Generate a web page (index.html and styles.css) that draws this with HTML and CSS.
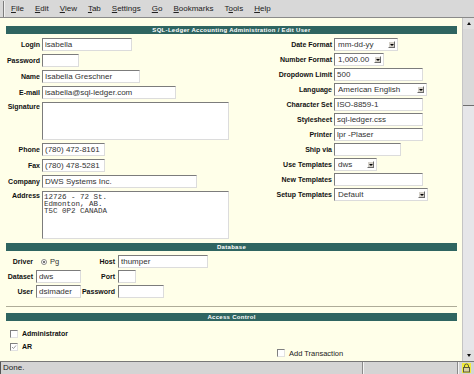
FILE: index.html
```html
<!DOCTYPE html>
<html lang="en">
<head>
    <meta charset="UTF-8">
    <title>SQL-Ledger Accounting Administration / Edit User</title>
    <link rel="stylesheet" href="styles.css">
</head>
<body>
    <div class="menubar">
        <span class="grip"></span>
        <span class="menu"><u>F</u>ile</span>
        <span class="menu"><u>E</u>dit</span>
        <span class="menu"><u>V</u>iew</span>
        <span class="menu"><u>T</u>ab</span>
        <span class="menu"><u>S</u>ettings</span>
        <span class="menu"><u>G</u>o</span>
        <span class="menu"><u>B</u>ookmarks</span>
        <span class="menu">T<u>o</u>ols</span>
        <span class="menu"><u>H</u>elp</span>
    </div>

    <div class="viewport">
        <form class="page">
            <div class="listtop">SQL-Ledger Accounting Administration / Edit User</div>

            <div class="cols">
                <div class="fields left">
                    <label class="lbl">Login</label>
                    <input type="text" class="w90" value="isabella">
                    <label class="lbl">Password</label>
                    <input type="password" class="w37">
                    <label class="lbl">Name</label>
                    <input type="text" class="w98" value="Isabella Greschner">
                    <label class="lbl">E-mail</label>
                    <input type="text" class="w134" value="isabella@sql-ledger.com">
                    <label class="lbl top">Signature</label>
                    <textarea class="sig"></textarea>
                    <label class="lbl">Phone</label>
                    <input type="text" class="w63" value="(780) 472-8161">
                    <label class="lbl">Fax</label>
                    <input type="text" class="w63" value="(780) 478-5281">
                    <label class="lbl">Company</label>
                    <input type="text" class="w155" value="DWS Systems Inc.">
                    <label class="lbl top">Address</label>
                    <textarea class="addr">12726 - 72 St.
Edmonton, AB.
T5C 0P2 CANADA</textarea>
                </div>

                <div class="fields right">
                    <label class="lbl">Date Format</label>
                    <span class="select w64"><select><option>mm-dd-yy</option></select><span class="arrow"></span></span>
                    <label class="lbl">Number Format</label>
                    <span class="select w50"><select><option>1,000.00</option></select><span class="arrow"></span></span>
                    <label class="lbl">Dropdown Limit</label>
                    <input type="text" class="w89" value="500">
                    <label class="lbl">Language</label>
                    <span class="select w93"><select><option>American English</option></select><span class="arrow"></span></span>
                    <label class="lbl">Character Set</label>
                    <input type="text" class="w89" value="ISO-8859-1">
                    <label class="lbl">Stylesheet</label>
                    <input type="text" class="w89" value="sql-ledger.css">
                    <label class="lbl">Printer</label>
                    <input type="text" class="w89" value="lpr -Plaser">
                    <label class="lbl">Ship via</label>
                    <input type="text" class="w67">
                    <label class="lbl">Use Templates</label>
                    <span class="select w43"><select><option>dws</option></select><span class="arrow"></span></span>
                    <label class="lbl">New Templates</label>
                    <input type="text" class="w89">
                    <label class="lbl">Setup Templates</label>
                    <span class="select w94"><select><option>Default</option></select><span class="arrow"></span></span>
                </div>
            </div>

            <div class="listtop db-top">Database</div>

            <div class="dbgrid">
                <label class="lbl">Driver</label>
                <span class="driver"><input type="radio" class="rb" checked> Pg</span>
                <label class="lbl">Host</label>
                <input type="text" class="w90" value="thumper">
                <label class="lbl">Dataset</label>
                <input type="text" class="w45" value="dws">
                <label class="lbl">Port</label>
                <input type="text" class="w18">
                <label class="lbl">User</label>
                <input type="text" class="w45" value="dsimader">
                <label class="lbl">Password</label>
                <input type="password" class="w46">
            </div>

            <hr>

            <div class="listtop">Access Control</div>

            <div class="access">
                <label class="opt bold"><input type="checkbox" class="cb"> Administrator</label>
                <div class="module">
                    <label class="opt bold"><input type="checkbox" class="cb" checked> AR</label>
                    <div class="subs">
                        <label class="opt"><input type="checkbox" class="cb"> Add Transaction</label>
                        <span class="opt"><input type="checkbox" class="cb" aria-label="Sales Invoice"></span>
                    </div>
                </div>
            </div>
        </form>

        <div class="scrollbar">
            <div class="sb-btn"><span class="tri-up"></span></div>
            <div class="sb-thumb"></div>
            <div class="sb-track"></div>
            <div class="sb-btn"><span class="tri-down"></span></div>
        </div>
    </div>

    <div class="statusbar">
        <div class="status-text">Done.</div>
        <div class="status-mid"></div>
        <div class="status-lock">
            <svg width="9" height="10" viewBox="0 0 9 10">
                <rect x="0" y="0" width="9" height="10" fill="#f2ec3a"/>
                <path d="M2.5 4.5V3a2 2 0 0 1 4 0v1.5" fill="none" stroke="#5a5a3a" stroke-width="1"/>
                <rect x="1.5" y="4.5" width="6" height="4.5" fill="#d8cfa0" stroke="#5a5a3a" stroke-width="1"/>
            </svg>
        </div>
    </div>
</body>
</html>
```

FILE: styles.css
```css
* {
    box-sizing: border-box;
}
body {
    margin: 0;
    width: 474px;
    height: 374px;
    overflow: hidden;
    font-family: "Liberation Sans", Arial, sans-serif;
    background-color: #d6d6d6;
}
.menubar {
    height: 18px;
    display: flex;
    align-items: center;
    padding-left: 3px;
    background-color: #d8d8d8;
    border-bottom: 1px solid #8a8a8a;
    font-size: 8px;
    color: #222;
}
.grip {
    width: 2px;
    height: 16px;
    background-color: #7c7c7c;
    border-right: 1px solid #f0f0f0;
    margin-right: 6px;
}
.menu + .menu {
    margin-left: 11px;
}
.viewport {
    display: flex;
    height: 343px;
    overflow: hidden;
    background-color: #ffffe9;
}
.page {
    flex: 1;
    margin: 0;
    padding: 8px 0 0 6px;
    overflow: hidden;
}
.listtop {
    width: 451px;
    height: 8px;
    line-height: 8px;
    background-color: #2f6561;
    color: #fff;
    font-size: 6px;
    font-weight: bold;
    letter-spacing: 0.3px;
    text-align: center;
}
.cols {
    display: grid;
    grid-template-columns: 229px 222px;
    margin-top: 4px;
}
.fields {
    display: grid;
    column-gap: 2px;
    align-items: center;
    align-content: start;
    justify-items: start;
}
.left {
    grid-template-columns: 34px auto;
    row-gap: 3px;
}
.right {
    grid-template-columns: 97px auto;
    row-gap: 2px;
}
.lbl {
    justify-self: end;
    font-size: 7px;
    font-weight: bold;
    color: #111;
    white-space: nowrap;
}
.top {
    align-self: start;
    padding-top: 1px;
}
input[type=text], input[type=password], textarea, .select {
    height: 13px;
    margin: 0;
    padding: 0 2px;
    border: 1px solid;
    border-color: #7c7c7c #dcdcdc #dcdcdc #7c7c7c;
    background-color: #fff;
    font-family: "Liberation Sans", Arial, sans-serif;
    font-size: 8px;
    color: #333;
}
textarea {
    resize: none;
    padding: 2px 1px;
    font-family: "Liberation Mono", "Courier New", monospace;
    font-size: 7.5px;
    line-height: 7px;
    overflow: hidden;
}
.sig {
    width: 187px;
    height: 38px;
}
.addr {
    width: 187px;
    height: 48px;
}
.select {
    display: inline-flex;
    align-items: center;
    padding: 0 2px 0 0;
}
.select select {
    flex: 1;
    min-width: 0;
    height: 11px;
    border: none;
    padding: 0 0 0 3px;
    background: #fff;
    appearance: none;
    font-family: "Liberation Sans", Arial, sans-serif;
    font-size: 8px;
    color: #333;
}
.arrow {
    width: 7px;
    height: 7px;
    background-color: #d4d0c8;
    border: 1px solid;
    border-color: #fff #6c6c6c #6c6c6c #fff;
    display: flex;
    align-items: center;
    justify-content: center;
}
.arrow::after {
    content: "";
    border-left: 2px solid transparent;
    border-right: 2px solid transparent;
    border-top: 2px solid #000;
}
.w18 { width: 18px; }
.w37 { width: 37px; }
.w43 { width: 43px; }
.w45 { width: 45px; }
.w46 { width: 46px; }
.w50 { width: 50px; }
.w63 { width: 63px; }
.w64 { width: 64px; }
.w67 { width: 67px; }
.w89 { width: 89px; }
.w90 { width: 90px; }
.w93 { width: 93px; }
.w94 { width: 94px; }
.w98 { width: 98px; }
.w134 { width: 134px; }
.w155 { width: 155px; }
.db-top {
    margin-top: 4px;
}
.dbgrid {
    display: grid;
    grid-template-columns: 27px 45px 31px auto;
    column-gap: 3px;
    row-gap: 2px;
    align-items: center;
    justify-items: start;
    margin-top: 4px;
}
.driver {
    display: flex;
    align-items: center;
    gap: 3px;
    padding-left: 5px;
    font-size: 7.5px;
    color: #333;
}
.rb {
    appearance: none;
    width: 6px;
    height: 6px;
    margin: 0;
    border: 1px solid #8a8a8a;
    border-radius: 50%;
    background: radial-gradient(circle, #777 0 1px, #fff 1.2px);
}
hr {
    width: 451px;
    margin: 8px 0 6px;
    border: 0;
    border-top: 1px solid #aeac98;
}
.access {
    padding: 6px 0 0 4px;
}
.opt {
    display: flex;
    align-items: center;
    gap: 4px;
    height: 13px;
    font-size: 7.5px;
    color: #222;
}
.bold {
    font-size: 7px;
    font-weight: bold;
    color: #111;
}
.cb {
    appearance: none;
    width: 8px;
    height: 8px;
    margin: 0;
    border: 1px solid;
    border-color: #808080 #e2e2e2 #e2e2e2 #808080;
    background-color: #fff;
}
.cb:checked {
    background: #fff url("data:image/svg+xml,%3Csvg xmlns='http://www.w3.org/2000/svg' width='6' height='6'%3E%3Cpath d='M1 3l1.5 1.5L5 1.5' fill='none' stroke='%23999' stroke-width='1'/%3E%3C/svg%3E") center no-repeat;
}
.module {
    display: grid;
    grid-template-columns: 267px auto;
}
.subs {
    padding-top: 7px;
}
.subs .opt {
    height: 12px;
}
.scrollbar {
    width: 12px;
    display: flex;
    flex-direction: column;
    background-color: #e6e6e9;
    border-left: 1px solid #c4c4c4;
}
.sb-btn {
    height: 11px;
    display: flex;
    align-items: center;
    justify-content: center;
    background-color: #e0e0e0;
}
.tri-up {
    border-left: 2px solid transparent;
    border-right: 2px solid transparent;
    border-bottom: 3px solid #111;
}
.tri-down {
    border-left: 2px solid transparent;
    border-right: 2px solid transparent;
    border-top: 3px solid #111;
}
.sb-thumb {
    height: 77px;
    background-color: #d9d9d9;
    border-bottom: 1px solid #6e6e6e;
}
.sb-track {
    flex: 1;
}
.statusbar {
    height: 13px;
    display: flex;
    border-top: 1px solid #777;
    background-color: #d4d4d4;
}
.status-text {
    width: 363px;
    padding-left: 2px;
    border-left: 1px solid #555;
    border-right: 1px solid #8a8a8a;
    font-size: 8px;
    line-height: 12px;
    color: #222;
}
.status-mid {
    width: 95px;
    border-left: 1px solid #f4f4f4;
    border-right: 1px solid #8a8a8a;
}
.status-lock {
    flex: 1;
    display: flex;
    align-items: center;
    justify-content: center;
    border-left: 1px solid #f4f4f4;
}
```
